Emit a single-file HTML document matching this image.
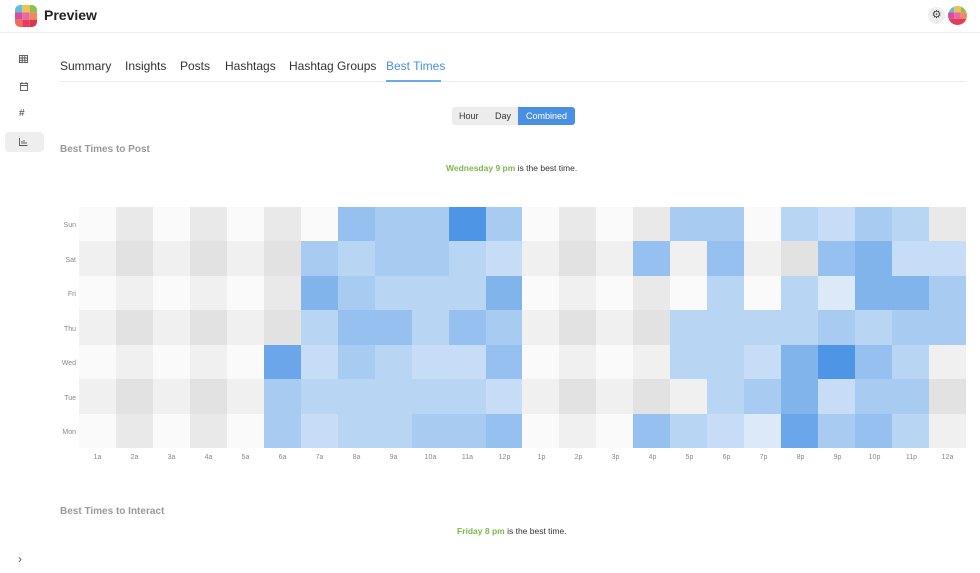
<!DOCTYPE html>
<html><head><meta charset="utf-8"><style>
*{margin:0;padding:0;box-sizing:border-box}
body{width:980px;height:573px;overflow:hidden;background:#fff;font-family:"Liberation Sans",sans-serif;position:relative;color:#333}
.abs{position:absolute}
.hdr{left:0;top:0;width:980px;height:33px;border-bottom:1px solid #eee}
.tab{position:absolute;top:59px;font-size:12px;color:#333}
.grid{position:absolute;left:79px;top:207px;width:887px;height:241px;display:grid;grid-template-columns:repeat(24,1fr);grid-template-rows:repeat(7,1fr)}
.W{background:#fafafa}.A{background:#f0f0f0}.B{background:#e9e9e9}.C{background:#e2e2e2}
.b1{background:#dbe9f9}.b2{background:#c7ddf7}.b3{background:#b8d5f4}.b4{background:#a8cbf2}.b5{background:#96c0ef}.b6{background:#82b4ec}.b7{background:#6ca6ea}.b8{background:#4f95e6}
.dl{position:absolute;left:58px;width:18px;text-align:right;font-size:7px;color:#888}
.hl{position:absolute;top:454px;width:37px;text-align:center;font-size:7px;color:#888}
</style></head><body>
<div class="abs hdr"></div>
<svg class="abs" style="left:15px;top:5px" width="22" height="22" viewBox="0 0 22 22">
<defs><clipPath id="c"><rect width="22" height="22" rx="5"/></clipPath></defs>
<g clip-path="url(#c)">
<rect x="0" y="0" width="7.3" height="7.3" fill="#5bc0de"/><rect x="7.3" y="0" width="7.4" height="7.3" fill="#f2c14e"/><rect x="14.7" y="0" width="7.3" height="7.3" fill="#8bc34a"/>
<rect x="0" y="7.3" width="7.3" height="7.4" fill="#d64d9a"/><rect x="7.3" y="7.3" width="7.4" height="7.4" fill="#e86aa5"/><rect x="14.7" y="7.3" width="7.3" height="7.4" fill="#f08a5d"/>
<rect x="0" y="14.7" width="7.3" height="7.3" fill="#f06a5a"/><rect x="7.3" y="14.7" width="7.4" height="7.3" fill="#e23d5a"/><rect x="14.7" y="14.7" width="7.3" height="7.3" fill="#d8344f"/>
</g></svg>
<div class="abs" style="left:44px;top:7px;font-size:14px;font-weight:bold;color:#222">Preview</div>
<div class="abs" style="left:928px;top:7px;width:17px;height:17px;border-radius:50%;background:#eee;color:#444;font-size:11px;text-align:center;line-height:17px">⚙</div>
<svg class="abs" style="left:948px;top:6px" width="19" height="19" viewBox="0 0 22 22">
<defs><clipPath id="d"><circle cx="11" cy="11" r="11"/></clipPath></defs>
<g clip-path="url(#d)">
<rect x="0" y="0" width="7.3" height="7.3" fill="#5bc0de"/><rect x="7.3" y="0" width="7.4" height="7.3" fill="#f2c14e"/><rect x="14.7" y="0" width="7.3" height="7.3" fill="#8bc34a"/>
<rect x="0" y="7.3" width="7.3" height="7.4" fill="#d64d9a"/><rect x="7.3" y="7.3" width="7.4" height="7.4" fill="#e86aa5"/><rect x="14.7" y="7.3" width="7.3" height="7.4" fill="#f08a5d"/>
<rect x="0" y="14.7" width="22" height="7.3" fill="#e23d5a"/></g></svg>
<svg class="abs" style="left:19px;top:55px" width="9" height="8" viewBox="0 0 9 8" fill="none" stroke="#555" stroke-width="0.9"><rect x="0.5" y="0.5" width="8" height="7"/><path d="M0.5 3h8M0.5 5.3h8M3.2 0.5v7M5.8 0.5v7"/></svg>
<svg class="abs" style="left:20px;top:82px" width="8" height="9" viewBox="0 0 8 9" fill="none" stroke="#555" stroke-width="0.9"><rect x="0.5" y="1.5" width="7" height="7"/><path d="M0.5 3.5h7M2 0v2M6 0v2"/></svg>
<div class="abs" style="left:19px;top:108px;font-size:10px;color:#444">#</div>
<div class="abs" style="left:5px;top:132px;width:39px;height:20px;border-radius:4px;background:#eee"></div>
<svg class="abs" style="left:19px;top:138px" width="9" height="8" viewBox="0 0 9 8" fill="none" stroke="#555" stroke-width="0.9"><path d="M0.5 0v7.5h8M3 6V3M5 6V2M7 6V4"/></svg>
<div class="abs" style="left:18px;top:552px;font-size:12px;color:#555">›</div>
<div class="tab" style="left:60px">Summary</div>
<div class="tab" style="left:125px">Insights</div>
<div class="tab" style="left:180px">Posts</div>
<div class="tab" style="left:225px">Hashtags</div>
<div class="tab" style="left:289px">Hashtag Groups</div>
<div class="tab" style="left:386px;color:#4a90e2">Best Times</div>
<div class="abs" style="left:60px;top:81px;width:906px;height:1px;background:#eee"></div>
<div class="abs" style="left:386px;top:80px;width:55px;height:2px;background:#6aa8ee"></div>
<div class="abs" style="left:452px;top:107px;width:123px;height:18px;border-radius:3px;background:#ececec;font-size:9px;line-height:18px">
<span class="abs" style="left:7px;color:#333">Hour</span>
<span class="abs" style="left:43px;color:#333">Day</span>
<span class="abs" style="left:66px;top:0;width:57px;height:18px;background:#4a90e2;color:#fff;text-align:center;border-radius:0 3px 3px 0">Combined</span>
</div>
<div class="abs" style="left:60px;top:144px;font-size:10px;font-weight:bold;color:#999">Best Times to Post</div>
<div class="abs" style="left:446px;top:163px;font-size:8.5px;color:#333"><b style="color:#7cb84a">Wednesday 9 pm</b> is the best time.</div>
<div class="dl" style="top:222px">Sun</div><div class="dl" style="top:257px">Sat</div><div class="dl" style="top:291px">Fri</div><div class="dl" style="top:326px">Thu</div><div class="dl" style="top:360px">Wed</div><div class="dl" style="top:395px">Tue</div><div class="dl" style="top:429px">Mon</div>
<div class="grid">
<i class="W"></i><i class="B"></i><i class="W"></i><i class="B"></i><i class="W"></i><i class="B"></i><i class="W"></i><i class="b5"></i><i class="b4"></i><i class="b4"></i><i class="b8"></i><i class="b4"></i><i class="W"></i><i class="B"></i><i class="W"></i><i class="B"></i><i class="b4"></i><i class="b4"></i><i class="W"></i><i class="b3"></i><i class="b2"></i><i class="b4"></i><i class="b3"></i><i class="B"></i>
<i class="A"></i><i class="C"></i><i class="A"></i><i class="C"></i><i class="A"></i><i class="C"></i><i class="b4"></i><i class="b3"></i><i class="b4"></i><i class="b4"></i><i class="b3"></i><i class="b2"></i><i class="A"></i><i class="C"></i><i class="A"></i><i class="b5"></i><i class="A"></i><i class="b5"></i><i class="A"></i><i class="C"></i><i class="b5"></i><i class="b6"></i><i class="b2"></i><i class="b2"></i>
<i class="W"></i><i class="A"></i><i class="W"></i><i class="A"></i><i class="W"></i><i class="B"></i><i class="b6"></i><i class="b4"></i><i class="b3"></i><i class="b3"></i><i class="b3"></i><i class="b6"></i><i class="W"></i><i class="A"></i><i class="W"></i><i class="B"></i><i class="W"></i><i class="b3"></i><i class="W"></i><i class="b3"></i><i class="b1"></i><i class="b6"></i><i class="b6"></i><i class="b4"></i>
<i class="A"></i><i class="C"></i><i class="A"></i><i class="C"></i><i class="A"></i><i class="C"></i><i class="b3"></i><i class="b5"></i><i class="b5"></i><i class="b3"></i><i class="b5"></i><i class="b4"></i><i class="A"></i><i class="C"></i><i class="A"></i><i class="C"></i><i class="b3"></i><i class="b3"></i><i class="b3"></i><i class="b3"></i><i class="b4"></i><i class="b3"></i><i class="b4"></i><i class="b4"></i>
<i class="W"></i><i class="A"></i><i class="W"></i><i class="A"></i><i class="W"></i><i class="b7"></i><i class="b2"></i><i class="b4"></i><i class="b3"></i><i class="b2"></i><i class="b2"></i><i class="b5"></i><i class="W"></i><i class="A"></i><i class="W"></i><i class="A"></i><i class="b3"></i><i class="b3"></i><i class="b2"></i><i class="b6"></i><i class="b8"></i><i class="b5"></i><i class="b3"></i><i class="A"></i>
<i class="A"></i><i class="C"></i><i class="A"></i><i class="C"></i><i class="A"></i><i class="b4"></i><i class="b3"></i><i class="b3"></i><i class="b3"></i><i class="b3"></i><i class="b3"></i><i class="b2"></i><i class="A"></i><i class="C"></i><i class="A"></i><i class="C"></i><i class="A"></i><i class="b3"></i><i class="b4"></i><i class="b6"></i><i class="b2"></i><i class="b4"></i><i class="b4"></i><i class="C"></i>
<i class="W"></i><i class="B"></i><i class="W"></i><i class="B"></i><i class="W"></i><i class="b4"></i><i class="b2"></i><i class="b3"></i><i class="b3"></i><i class="b4"></i><i class="b4"></i><i class="b5"></i><i class="W"></i><i class="A"></i><i class="W"></i><i class="b5"></i><i class="b3"></i><i class="b2"></i><i class="b1"></i><i class="b7"></i><i class="b4"></i><i class="b5"></i><i class="b3"></i><i class="A"></i>
</div>
<div class="hl" style="left:79px">1a</div><div class="hl" style="left:116px">2a</div><div class="hl" style="left:153px">3a</div><div class="hl" style="left:190px">4a</div><div class="hl" style="left:227px">5a</div><div class="hl" style="left:264px">6a</div><div class="hl" style="left:301px">7a</div><div class="hl" style="left:338px">8a</div><div class="hl" style="left:375px">9a</div><div class="hl" style="left:412px">10a</div><div class="hl" style="left:449px">11a</div><div class="hl" style="left:486px">12p</div><div class="hl" style="left:523px">1p</div><div class="hl" style="left:560px">2p</div><div class="hl" style="left:597px">3p</div><div class="hl" style="left:634px">4p</div><div class="hl" style="left:671px">5p</div><div class="hl" style="left:708px">6p</div><div class="hl" style="left:745px">7p</div><div class="hl" style="left:782px">8p</div><div class="hl" style="left:819px">9p</div><div class="hl" style="left:856px">10p</div><div class="hl" style="left:893px">11p</div><div class="hl" style="left:929px">12a</div>
<div class="abs" style="left:60px;top:506px;font-size:10px;font-weight:bold;color:#999">Best Times to Interact</div>
<div class="abs" style="left:457px;top:526px;font-size:8.5px;color:#333"><b style="color:#7cb84a">Friday 8 pm</b> is the best time.</div>
</body></html>
